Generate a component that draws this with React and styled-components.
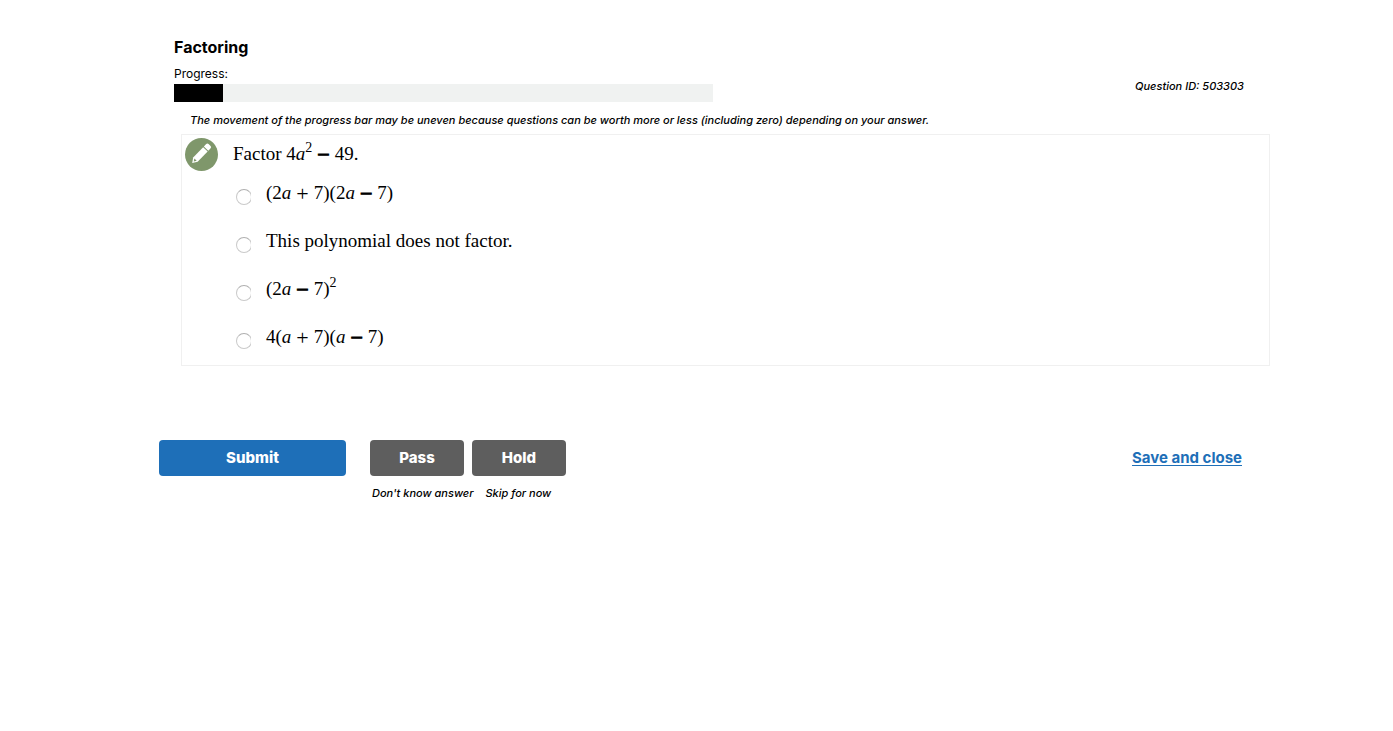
import React from "react";
import styled, { createGlobalStyle } from "styled-components";

const GlobalStyle = createGlobalStyle`
  *, *::before, *::after { box-sizing: border-box; }
  body {
    margin: 0;
    background: #fff;
    color: #000;
    font-family: Inter, "Liberation Sans", sans-serif;
  }
`;

const Page = styled.main`
  padding: 36px 123px 36px 159px;
`;

const Header = styled.header`
  display: flex;
  justify-content: space-between;
  align-items: flex-end;
  padding: 0 26px 0 15px;
`;

const ProgressArea = styled.div`
  flex: 0 1 539px;
`;

const Title = styled.h1`
  margin: 0 0 8px;
  font-size: 16px;
  line-height: 22px;
  font-weight: 700;
`;

const ProgressLabel = styled.div`
  font-size: 12px;
  line-height: 16px;
  padding-bottom: 2px;
`;

const Track = styled.div`
  height: 18px;
  background: #f0f2f1;
`;

const Bar = styled.div`
  height: 100%;
  background: #000;
`;

const Note = styled.p`
  margin: 0;
  font-size: 11px;
  line-height: 16px;
  font-style: italic;
  font-weight: 500;
  white-space: nowrap;
`;

const QuestionId = styled(Note)`
  padding-bottom: 8px;
`;

const ProgressNote = styled(Note)`
  padding: 10px 0 6px 31px;
`;

const Card = styled.form`
  margin-left: 22px;
  padding: 3px;
  border: 1px solid #f0f0f0;
  font-family: "Liberation Serif", "Times New Roman", serif;
  font-size: 19px;
  line-height: 32px;
`;

const Question = styled.div`
  display: flex;
  gap: 15px;
`;

const Badge = styled.svg`
  display: block;
  width: 33px;
  height: 33px;
`;

const Options = styled.div`
  display: flex;
  flex-direction: column;
  gap: 16px;
  padding: 6px 0 9px 51px;
`;

const Option = styled.label`
  display: flex;
  align-items: flex-start;
  gap: 15px;
  height: 32px;
`;

const RadioFrame = styled.span`
  display: block;
  width: 15px;
  height: 16px;
  margin-top: 12px;
  overflow: hidden;
`;

const Radio = styled.input`
  appearance: none;
  display: block;
  width: 16px;
  height: 16px;
  margin: 0;
  border: 1px solid #cacaca;
  border-top-color: #b0b0b0;
  border-radius: 50%;
  background: #fff;

  &:checked { background: radial-gradient(#000 0 3px, #fff 4px); }
`;

const Variable = styled.i`
  font-style: italic;
`;

const Operator = styled.span`
  margin: 0 5px;
  font-size: 22px;
  line-height: 1;
  vertical-align: -2px;
  -webkit-text-stroke: ${(p) => (p.$heavy ? "1px #000" : "0")};
`;

const Power = styled.sup`
  font-size: 14px;
  line-height: 0;
  vertical-align: 8px;
`;

const Actions = styled.div`
  display: flex;
  align-items: flex-start;
  padding: 74px 28px 0 0;
`;

const Button = styled.button`
  width: ${(p) => (p.$primary ? 187 : 94)}px;
  height: 36px;
  margin-right: ${(p) => (p.$primary ? 24 : 8)}px;
  padding: 0;
  border: 0;
  border-radius: 4px;
  background: ${(p) => (p.$primary ? "#1e6fb8" : "#5e5e5e")};
  color: #fff;
  font-family: inherit;
  font-size: 15px;
  font-weight: 800;
  line-height: 36px;
`;

const SaveLink = styled.a`
  margin-left: auto;
  color: #1e6fb8;
  font-size: 15px;
  font-weight: 700;
  line-height: 36px;
  text-underline-offset: 2px;
`;

const Hints = styled.div`
  display: flex;
  gap: 12px;
  padding: 9px 0 0 213px;
`;

const A = () => <Variable>a</Variable>;
const Plus = () => <Operator>+</Operator>;
const Minus = () => <Operator $heavy>−</Operator>;

const options = [
  { id: "product", body: <>(2<A /><Plus />7)(2<A /><Minus />7)</> },
  { id: "none", body: "This polynomial does not factor." },
  { id: "square", body: <>(2<A /><Minus />7)<Power>2</Power></> },
  { id: "common", body: <>4(<A /><Plus />7)(<A /><Minus />7)</> },
];

function PencilBadge() {
  return (
    <Badge viewBox="0 0 33 33" aria-hidden="true">
      <circle cx="16.5" cy="16.5" r="16.5" fill="#7f976b" />
      <g fill="#fff" transform="translate(7.2 25) rotate(-46)">
        <path d="M0 0 L4.6 -3.1 H19 V3.1 H4.6 Z" />
        <path d="M20 -3.1 H23 Q25 -3.1 25 -1.4 V1.4 Q25 3.1 23 3.1 H20 Z" />
        <path d="M2.2 0 L4.8 -1.6 V1.6 Z" fill="#7f976b" />
      </g>
    </Badge>
  );
}

export default function App() {
  const progress = 9;
  return (
    <>
      <GlobalStyle />
      <Page>
        <Header>
          <ProgressArea>
            <Title>Factoring</Title>
            <ProgressLabel id="progress-label">Progress:</ProgressLabel>
            <Track role="progressbar" aria-labelledby="progress-label" aria-valuenow={progress}>
              <Bar style={{ width: `${progress}%` }} />
            </Track>
          </ProgressArea>
          <QuestionId>Question ID: 503303</QuestionId>
        </Header>
        <ProgressNote>
          The movement of the progress bar may be uneven because questions can be worth more or less (including zero) depending on your answer.
        </ProgressNote>
        <Card id="question">
          <Question>
            <PencilBadge />
            <span>Factor 4<A /><Power>2</Power><Minus />49.</span>
          </Question>
          <Options role="radiogroup" aria-label="Answer choices">
            {options.map((o) => (
              <Option key={o.id} htmlFor={o.id}>
                <RadioFrame><Radio type="radio" name="answer" id={o.id} /></RadioFrame>
                <span>{o.body}</span>
              </Option>
            ))}
          </Options>
        </Card>
        <Actions>
          <Button $primary type="submit" form="question">Submit</Button>
          <Button type="button">Pass</Button>
          <Button type="button">Hold</Button>
          <SaveLink href="#">Save and close</SaveLink>
        </Actions>
        <Hints>
          <Note>Don't know answer</Note>
          <Note>Skip for now</Note>
        </Hints>
      </Page>
    </>
  );
}
